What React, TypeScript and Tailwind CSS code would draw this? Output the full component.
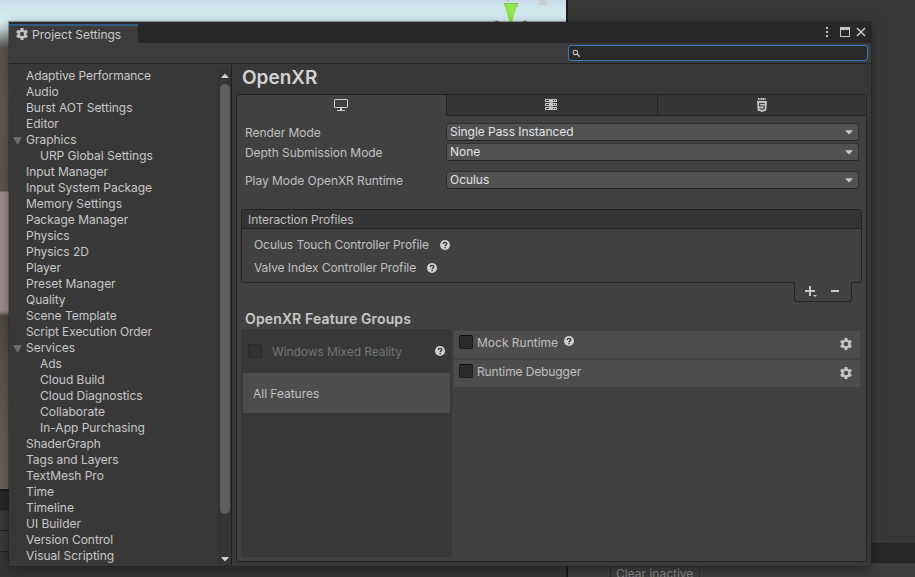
import React from "react";

type NavItem = { label: string; child?: boolean; open?: boolean; tight?: boolean };

const NAV: NavItem[] = [
  { label: "Adaptive Performance", tight: true },
  { label: "Audio" },
  { label: "Burst AOT Settings" },
  { label: "Editor" },
  { label: "Graphics", open: true },
  { label: "URP Global Settings", child: true },
  { label: "Input Manager" },
  { label: "Input System Package" },
  { label: "Memory Settings" },
  { label: "Package Manager" },
  { label: "Physics" },
  { label: "Physics 2D" },
  { label: "Player" },
  { label: "Preset Manager" },
  { label: "Quality" },
  { label: "Scene Template" },
  { label: "Script Execution Order", tight: true },
  { label: "Services", open: true },
  { label: "Ads", child: true },
  { label: "Cloud Build", child: true },
  { label: "Cloud Diagnostics", child: true },
  { label: "Collaborate", child: true },
  { label: "In-App Purchasing", child: true },
  { label: "ShaderGraph" },
  { label: "Tags and Layers" },
  { label: "TextMesh Pro" },
  { label: "Time" },
  { label: "Timeline" },
  { label: "UI Builder" },
  { label: "Version Control" },
  { label: "Visual Scripting" },
];

function Gear({ className = "" }: { className?: string }) {
  return (
    <svg width="12" height="12" viewBox="0 0 12 12" className={`shrink-0 ${className}`}>
      <g fill="#c4c4c4">
        <rect x="4.5" y="0" width="3" height="12" rx="0.5" />
        <rect x="4.5" y="0" width="3" height="12" rx="0.5" transform="rotate(60 6 6)" />
        <rect x="4.5" y="0" width="3" height="12" rx="0.5" transform="rotate(120 6 6)" />
        <circle cx="6" cy="6" r="4.6" />
      </g>
      <circle cx="6" cy="6" r="2.2" fill="#484848" />
    </svg>
  );
}

function Help({ className = "" }: { className?: string }) {
  return (
    <svg width="10" height="10" viewBox="0 0 10 10" className={`shrink-0 ${className}`}>
      <circle cx="5" cy="5" r="5" fill="#d0d0d0" />
      <path d="M3.3 3.9C3.3 1.9 6.8 1.9 6.8 3.8C6.8 4.9 5.1 4.9 5.1 6.2" fill="none" stroke="#333" strokeWidth="1.4" />
      <rect x="4.4" y="7" width="1.4" height="1.3" fill="#333" />
    </svg>
  );
}

function Dropdown({ value }: { value: string }) {
  return (
    <div className="flex h-[18px] w-[413px] items-center justify-between rounded-[3px] border border-[#303030] border-b-[#242424] bg-[#515151] pr-[5px] pl-[3px] text-[#e4e4e4]">
      <span className="leading-4 tracking-[-0.04px]">{value}</span>
      <svg width="8" height="5" viewBox="0 0 8 5">
        <path d="M0 0.2H8L4 4.6Z" fill="#c8c8c8" />
      </svg>
    </div>
  );
}

function Field({ label, value, className = "" }: { label: string; value: string; className?: string }) {
  return (
    <div className={`flex h-[18px] ${className}`}>
      <span className="w-[201px] pt-[2px] leading-4 tracking-[-0.05px]">{label}</span>
      <Dropdown value={value} />
    </div>
  );
}

function Check({ className = "" }: { className?: string }) {
  return (
    <span className={`h-[14px] w-[14px] shrink-0 rounded-[2px] border border-[#1c1c1c] border-t-[#0d0d0d] bg-[#2a2a2a] ${className}`} />
  );
}

function SceneBackdrop() {
  return (
    <div className="absolute inset-0 flex flex-col">
      <div className="flex h-[543px]">
        <div className="flex w-[566px] flex-col">
          <div className="h-[489px] bg-[linear-gradient(180deg,#c9dbe9_0px,#d2e8ef_10px,#d6edf0_20px,#c8d9dc_28px,#8d9494_38px,#5a5451_48px,#605955_110px,#5c5550_191px,#9a8f8e_192px,#9a8f8e_311px,#4f4a45_316px,#5c564e_380px,#6b635a_489px)]">
            <svg width="566" height="489" className="block">
              <path d="M504 3H518L513 18L512 24H510L508 17Z" fill="#8ee34c" />
              <path d="M504 3H518L517 7H505Z" fill="#79c443" />
              <path d="M505 4H517L512 18H510Z" fill="#93e653" />
              <rect x="539" y="0" width="8" height="5" fill="#c9ced0" />
              <rect x="506" y="0" width="4" height="1" fill="#bcc8cd" />
              <path d="M494 22Q497 19 500 22Z M522 22Q525 19 528 22Z" fill="#728085" />
            </svg>
          </div>
          <div className="h-[2px] bg-[#191919]" />
          <div className="h-[18px] bg-[#282828]" />
          <div className="h-px bg-[#202020]" />
          <div className="h-[20px] bg-[#383838]" />
          <div className="h-px bg-[#202020]" />
          <div className="flex-1 bg-[#3a3a3a]" />
        </div>
        <div className="w-[2px] bg-[#191919]" />
        <div className="flex-1 bg-[#383838]" />
      </div>
      <div className="flex flex-1">
        <div className="flex w-[566px] flex-col bg-[#343434]">
          <div className="h-[8px] bg-[#3a3a3a]" />
          <div className="h-px bg-[#202020]" />
        </div>
        <div className="w-[2px] bg-[#191919]" />
        <div className="flex flex-1 flex-col bg-[#3c3c3c]">
          <div className="h-[20px] border-b border-[#222] bg-[#282828]" />
          <div className="flex h-[14px] pl-[42px]">
            <span className="h-[14px] w-[90px] border-x border-[#2a2a2a] pt-[3px] pl-[5px] leading-4 tracking-[0px] text-[#858585]">
              Clear inactive
            </span>
          </div>
        </div>
      </div>
    </div>
  );
}

function TitleBar() {
  return (
    <div className="flex h-[21px] justify-between bg-[#282828]">
      <div className="mt-[2px] flex h-[19px] w-[129px] border-t-2 border-[#2c5d87] bg-[#3c3c3c] pl-[7px]">
        <Gear className="mt-[2px]" />
        <span className="ml-[4px] pt-px leading-4 text-[#c8c8c8]">Project Settings</span>
      </div>
      <svg width="48" height="21" viewBox="0 0 48 21">
        <g fill="#c4c4c4">
          <rect x="3" y="5" width="2" height="2" />
          <rect x="3" y="9" width="2" height="2" />
          <rect x="3" y="13" width="2" height="2" />
          <path d="M17 5H27V15H17ZM18 8V14H26V8Z" fillRule="evenodd" />
        </g>
        <path d="M34 6L42 14M42 6L34 14" stroke="#c4c4c4" strokeWidth="1.6" />
      </svg>
    </div>
  );
}

function Sidebar() {
  return (
    <>
      <div className="flex w-[209px] flex-col pt-[4px] text-[#c8c8c8]">
        {NAV.map((n) => (
          <div key={n.label} className={`flex h-4 shrink-0 ${n.child ? "pl-[31px]" : "pl-[4px]"}`}>
            {!n.child && (
              <svg width="13" height="16" viewBox="0 0 13 16" className="shrink-0">
                {n.open && <path d="M0 5H9L4.5 13Z" fill="#6c6c6c" />}
              </svg>
            )}
            <span className={`leading-4 whitespace-nowrap ${n.tight ? "tracking-[-0.1px]" : "tracking-[-0.02px]"}`}>
              {n.label}
            </span>
          </div>
        ))}
      </div>
      <div className="mt-[4px] flex w-[13px] flex-col items-center border-l border-[#323232] bg-[#353535]">
        <svg width="8" height="16" viewBox="0 0 8 16" className="shrink-0">
          <path d="M0 10L4 5.5L8 10Z" fill="#d0d0d0" />
        </svg>
        <div className="h-[430px] w-[10px] rounded-full bg-[#5f5f5f]" />
        <svg width="8" height="16" viewBox="0 0 8 16" className="mt-[36px] shrink-0">
          <path d="M0 7L4 11.5L8 7Z" fill="#d0d0d0" />
        </svg>
      </div>
    </>
  );
}

function PlatformTabs() {
  return (
    <div className="flex h-[21px]">
      <div className="flex w-[209px] pt-[4px] pl-[97px]">
        <svg width="14" height="12" viewBox="0 0 14 12">
          <rect x="0.5" y="0.5" width="13" height="8" rx="0.6" fill="none" stroke="#d0d0d0" />
          <path d="M6 9H8V11H11V12H3V11H6Z" fill="#d0d0d0" />
        </svg>
      </div>
      <div className="flex w-[211px] border-b border-l border-[#232323] bg-[#353535] pt-[4px] pl-[98px]">
        <svg width="12" height="11" viewBox="0 0 12 11">
          <g fill="#c4c4c4">
            <rect width="12" height="3" />
            <rect y="4" width="12" height="3" />
            <rect y="8" width="12" height="3" />
            <rect x="4" width="4" height="11" opacity="0.75" />
          </g>
          <g fill="#353535">
            <path d="M1 1H4V2H1ZM1 5H4V6H1ZM1 9H4V10H1Z" />
            <path d="M8 1H9V2H8ZM10 1H11V2H10ZM8 5H9V6H8ZM10 5H11V6H10ZM8 9H9V10H8ZM10 9H11V10H10Z" />
          </g>
        </svg>
      </div>
      <div className="flex flex-1 justify-center rounded-tr-[2px] border-b border-l border-[#232323] bg-[#353535] pt-[3px]">
        <svg width="10" height="14" viewBox="0 0 10 14">
          <path d="M1 0H9V2H1Z" fill="#8c8c8c" />
          <path d="M1 0H2V2H1ZM4 0H5V2H4ZM6 0H7V2H6Z" fill="#c4c4c4" />
          <path d="M0 3H10L9.3 12.4L5 14L0.7 12.4Z" fill="#c4c4c4" />
          <path d="M7.7 5.5H2.6V8H7.2V10.6L5 11.2L2.6 10.6" fill="none" stroke="#3a3a3a" strokeWidth="1.1" />
        </svg>
      </div>
    </div>
  );
}

function Profiles() {
  return (
    <div className="mt-[20px] ml-[4px] flex w-[621px] flex-col">
      <div className="h-[74px] rounded-[3px] border border-[#232323]">
        <div className="h-[19px] border-b border-[#232323] bg-[#353535] pt-[2px] pl-[6px] leading-4 tracking-[-0.05px]">
          Interaction Profiles
        </div>
        <div className="flex items-center pt-[8px] leading-4">
          <span className="ml-[12px] w-[186px] tracking-[-0.06px] whitespace-nowrap">Oculus Touch Controller Profile</span>
          <Help />
        </div>
        <div className="flex items-center pt-[7px] leading-4">
          <span className="ml-[12px] w-[173px] tracking-[-0.07px] whitespace-nowrap">Valve Index Controller Profile</span>
          <Help />
        </div>
      </div>
      <div className="relative -mt-px mr-[10px] h-[20px] w-[58px] self-end rounded-b-[3px] border border-t-0 border-[#232323] bg-[#414141]">
        <svg width="56" height="19" viewBox="0 0 56 19" className="block">
          <path d="M10 8H14V4H16V8H20V10H16V14H14V10H10Z" fill="#c8c8c8" />
          <path d="M18 13H22L20 15Z" fill="#c8c8c8" />
          <rect x="36" y="8" width="8" height="2" fill="#c8c8c8" />
        </svg>
      </div>
    </div>
  );
}

function FeatureGroups() {
  return (
    <div className="ml-[4px] flex">
      <div className="flex h-[228px] w-[211px] flex-col bg-[#383838] px-[2px]">
        <div className="flex h-[44px] items-center pr-[5px] pl-[5px] text-[#747474]">
          <span className="h-[14px] w-[14px] rounded-[2px] border border-[#292929] bg-[#323232]" />
          <span className="mt-[2px] ml-[10px] flex-1 leading-4 tracking-[-0.08px]">Windows Mixed Reality</span>
          <Help />
        </div>
        <div className="flex h-[40px] items-center bg-[#4d4d4d] pt-[2px] pl-[10px] tracking-[-0.03px]">All Features</div>
      </div>
      <div className="mt-[2px] ml-[2px] flex w-[406px] flex-col gap-[2px]">
        <div className="flex h-[27px] bg-[#4d4d4d] pl-[5px]">
          <Check className="mt-[4px]" />
          <span className="mt-[4px] ml-[4px] w-[87px] leading-4 tracking-[0px] whitespace-nowrap">Mock Runtime</span>
          <Help className="mt-[5px]" />
          <Gear className="mt-[7px] mr-[8px] ml-auto" />
        </div>
        <div className="flex h-[27px] bg-[#4d4d4d] pl-[5px]">
          <Check className="mt-[4px]" />
          <span className="mt-[4px] ml-[4px] leading-4 tracking-[-0.12px]">Runtime Debugger</span>
          <Gear className="mt-[7px] mr-[8px] ml-auto" />
        </div>
      </div>
    </div>
  );
}

export default function App() {
  return (
    <div className="relative h-[577px] w-[915px] overflow-hidden bg-[#383838] font-['Inter',sans-serif] text-[12px] text-[#c0c0c0]">
      <SceneBackdrop />
      <div className="absolute top-[22px] left-[9px] flex h-[544px] w-[862px] flex-col bg-[#383838] shadow-[0_0_0_1px_rgba(30,30,30,0.35),0_2px_12px_rgba(0,0,0,0.35)]">
        <TitleBar />
        <div className="flex h-[21px] justify-end border-b border-[#232323] bg-[#3c3c3c] pt-[2px] pr-[3px]">
          <div className="h-[16px] w-[300px] rounded-[3px] border border-[#3a79bb] bg-[#2a2a2a] pt-[3px] pl-[3px]">
            <svg width="9" height="9" viewBox="0 0 9 9">
              <circle cx="3.4" cy="3.4" r="2.2" fill="none" stroke="#c4c4c4" strokeWidth="1.1" />
              <path d="M5 5L7.8 7.8" stroke="#c4c4c4" strokeWidth="1.3" />
            </svg>
          </div>
        </div>
        <div className="flex h-[502px] overflow-hidden">
          <Sidebar />
          <div className="flex flex-1 flex-col border-l border-[#202020] pl-[4px]">
            <h1 className="h-[30px] pt-px pl-[6px] text-[19px] leading-[25px] font-semibold text-[#d2d2d2]">OpenXR</h1>
            <div className="h-[468px] w-[631px] rounded-[3px] border border-[#232323] bg-[#414141]">
              <PlatformTabs />
              <div className="mt-[7px] pl-[8px]">
                <Field label="Render Mode" value="Single Pass Instanced" />
                <Field label="Depth Submission Mode" value="None" className="mt-[2px]" />
                <Field label="Play Mode OpenXR Runtime" value="Oculus" className="mt-[10px]" />
              </div>
              <Profiles />
              <h2 className="mt-[7px] h-[20px] pl-[8px] text-[14px] leading-[19px] font-semibold tracking-[0.14px] text-[#c8c8c8]">
                OpenXR Feature Groups
              </h2>
              <FeatureGroups />
            </div>
          </div>
        </div>
      </div>
    </div>
  );
}
